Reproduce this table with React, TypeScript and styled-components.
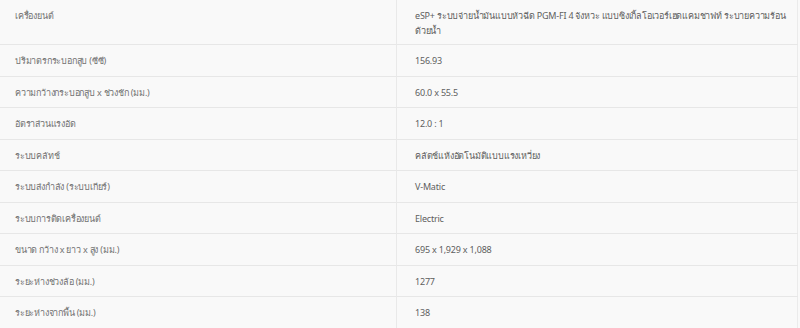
import React, { FC } from 'react';
import styled, { createGlobalStyle } from 'styled-components';

const GlobalStyle = createGlobalStyle`
  html, body {
    margin: 0;
    padding: 0;
    background: #f9f9f9;
  }
`;

const SpecTable = styled.div`
  width: 797px;
  display: grid;
  grid-template-columns: 396px 1fr;
  border-right: 1px solid #ebebeb;
  background: #f9f9f9;
  font-family: 'Noto Sans', 'Open Sans', sans-serif;
  font-size: 9px;
  line-height: 15px;
  letter-spacing: -0.2px;
`;

const Cell = styled.div<{ $first?: boolean; $value?: boolean }>`
  padding: 8px 12px ${({ $first }) => ($first ? '6px' : '7.5px')}
    ${({ $value }) => ($value ? '18px' : '15px')};
  border-bottom: 1px solid #e7e7e7;
  border-left: ${({ $value }) => ($value ? '1px solid #e9e9e9' : 'none')};
  min-height: ${({ $first }) => ($first ? '30px' : '15px')};
  color: ${({ $value }) => ($value ? '#5e5e5e' : '#727272')};
`;

const Line = styled.span`
  display: block;
  white-space: nowrap;
`;

const specs: [string, string][] = [
  ['เครื่องยนต์', 'eSP+ ระบบจ่ายน้ำมันแบบหัวฉีด PGM-FI 4 จังหวะ แบบซิงเกิ้ลโอเวอร์เฮดแคมชาฟท์ ระบายความร้อน\nด้วยน้ำ'],
  ['ปริมาตรกระบอกสูบ (ซีซี)', '156.93'],
  ['ความกว้างกระบอกสูบ x ช่วงชัก (มม.)', '60.0 x 55.5'],
  ['อัตราส่วนแรงอัด', '12.0 : 1'],
  ['ระบบคลัทช์', 'คลัตช์แห้งอัตโนมัติแบบแรงเหวี่ยง'],
  ['ระบบส่งกำลัง (ระบบเกียร์)', 'V-Matic'],
  ['ระบบการติดเครื่องยนต์', 'Electric'],
  ['ขนาด กว้าง x ยาว x สูง (มม.)', '695 x 1,929 x 1,088'],
  ['ระยะห่างช่วงล้อ (มม.)', '1277'],
  ['ระยะห่างจากพื้น (มม.)', '138'],
];

const App: FC = () => (
  <>
    <GlobalStyle />
    <SpecTable>
      {specs.map(([label, value], index) => (
        <React.Fragment key={label}>
          <Cell $first={index === 0}>{label}</Cell>
          <Cell $first={index === 0} $value>
            {value.split('\n').map((line) => (
              <Line key={line}>{line}</Line>
            ))}
          </Cell>
        </React.Fragment>
      ))}
    </SpecTable>
  </>
);

export default App;
